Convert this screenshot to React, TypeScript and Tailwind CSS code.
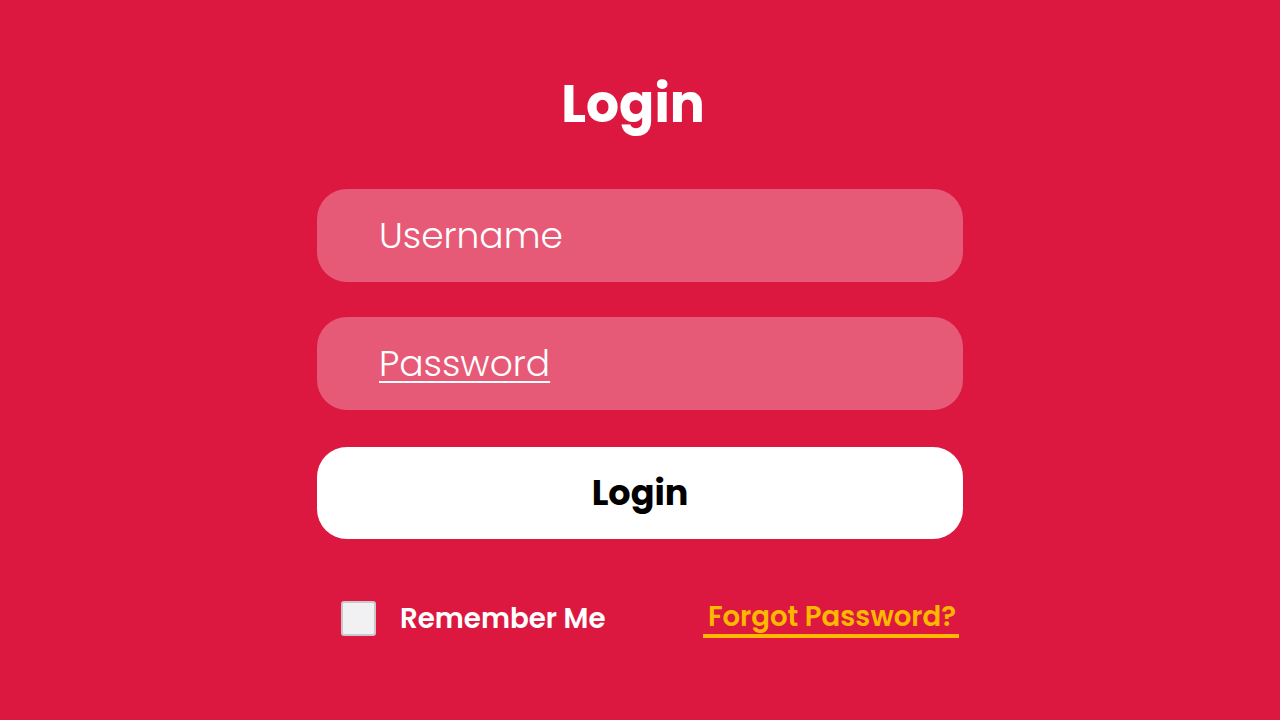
import React from 'react';

const font = { fontFamily: 'Poppins, "Open Sans", "Noto Sans", sans-serif' };

const App: React.FC = () => {
  return (
    <div
      className="w-[1280px] h-[720px] bg-[#dc1840] flex flex-col items-center overflow-hidden"
      style={font}
    >
      <h1 className="mt-[68px] mr-[14px] h-[72px] flex items-center text-[52px] font-bold text-white leading-none">
        Login
      </h1>

      <div className="mt-[49px] w-[646px] flex flex-col">
        <div className="h-[93px] rounded-[30px] bg-[#e65a77] flex items-center pl-[62px]">
          <span className="text-[36px] font-light text-white">Username</span>
        </div>
        <div className="mt-[35px] h-[93px] rounded-[30px] bg-[#e65a77] flex items-center pl-[62px]">
          <span className="text-[36px] font-light text-white underline underline-offset-[5px] decoration-[2px]">
            Password
          </span>
        </div>
        <button className="mt-[37px] h-[92px] rounded-[30px] bg-white flex items-center justify-center">
          <span className="text-[35px] font-bold text-black">Login</span>
        </button>

        <div className="mt-[59px] flex items-center pl-[24px]">
          <span className="w-[35px] h-[35px] rounded-[3px] bg-[#f1f1f3] border-2 border-[#c9c9cc]" />
          <span className="ml-[24px] text-[27.7px] font-semibold text-white">Remember Me</span>
          <span className="ml-auto mr-[4px] text-[27.6px] font-semibold text-[#ffb800] border-b-4 border-[#ffb800] pl-[5px] pr-[3px] leading-[34px]">
            Forgot Password?
          </span>
        </div>
      </div>
    </div>
  );
};

export default App;
